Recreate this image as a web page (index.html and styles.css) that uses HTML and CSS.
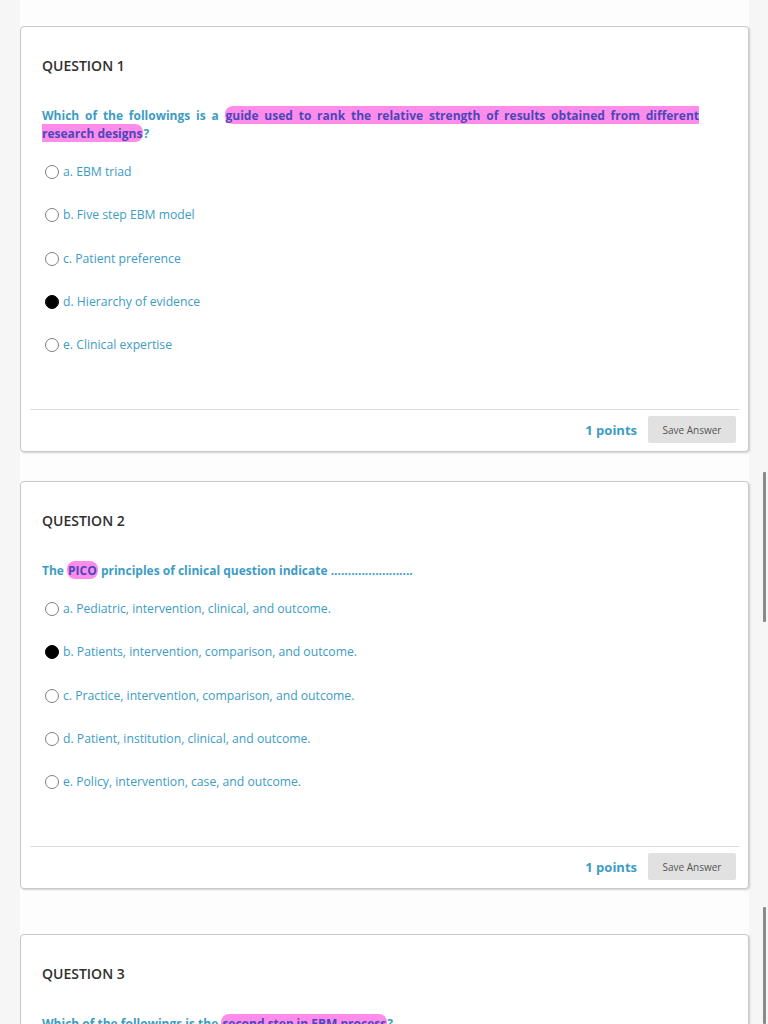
FILE: index.html
```html
<!DOCTYPE html>
<html>
<head>
<meta charset="utf-8">
<link rel="stylesheet" href="styles.css">
</head>
<body>
<div class="page">
  <section class="card card-first">
    <div class="card-body">
      <h2 class="q-title">QUESTION 1</h2>
      <p class="q-text">Which of the followings is a <span class="hl">guide used to rank the relative strength of results obtained from different research designs</span>?</p>
      <ul class="options">
        <li class="option"><span class="radio"></span><span class="opt-label">a. EBM triad</span></li>
        <li class="option"><span class="radio"></span><span class="opt-label">b. Five step EBM model</span></li>
        <li class="option"><span class="radio"></span><span class="opt-label">c. Patient preference</span></li>
        <li class="option"><span class="radio checked"></span><span class="opt-label">d. Hierarchy of evidence</span></li>
        <li class="option"><span class="radio"></span><span class="opt-label">e. Clinical expertise</span></li>
      </ul>
    </div>
    <div class="card-foot">
      <span class="points">1 points</span>
      <button class="save">Save Answer</button>
    </div>
  </section>

  <section class="card card-second">
    <div class="card-body">
      <h2 class="q-title">QUESTION 2</h2>
      <p class="q-text">The <span class="hl">PICO</span> principles of clinical question indicate ........................</p>
      <ul class="options options-2">
        <li class="option"><span class="radio"></span><span class="opt-label">a. Pediatric, intervention, clinical, and outcome.</span></li>
        <li class="option"><span class="radio checked"></span><span class="opt-label">b. Patients, intervention, comparison, and outcome.</span></li>
        <li class="option"><span class="radio"></span><span class="opt-label">c. Practice, intervention, comparison, and outcome.</span></li>
        <li class="option"><span class="radio"></span><span class="opt-label">d. Patient, institution, clinical, and outcome.</span></li>
        <li class="option"><span class="radio"></span><span class="opt-label">e. Policy, intervention, case, and outcome.</span></li>
      </ul>
    </div>
    <div class="card-foot">
      <span class="points">1 points</span>
      <button class="save">Save Answer</button>
    </div>
  </section>

  <section class="card card-third">
    <div class="card-body">
      <h2 class="q-title">QUESTION 3</h2>
      <p class="q-text">Which of the followings is the <span class="hl">second step in EBM process</span>?</p>
    </div>
  </section>
</div>
<div class="scroll scroll-a"></div>
<div class="scroll scroll-b"></div>
</body>
</html>
```

FILE: styles.css
```css
html, body {
  margin: 0;
  padding: 0;
}
body {
  background: #f6f6f6;
  font-family: "Open Sans", "Noto Sans", "Liberation Sans", sans-serif;
  height: 1024px;
  overflow: hidden;
}
.page {
  width: 729px;
  margin-left: 20px;
  background: #fdfdfd;
  padding-top: 26px;
  min-height: 1100px;
}
.card {
  background: #fff;
  border: 1px solid #c9c9c9;
  border-radius: 4px;
  box-shadow: 1px 1px 2px rgba(0,0,0,0.18);
  box-sizing: border-box;
}
.card-second { margin-top: 29px; }
.card-third { margin-top: 45px; }
.card-body {
  padding: 29px 21px 0 21px;
}
.q-title {
  margin: 0;
  font-size: 14px;
  line-height: 20px;
  font-weight: 600;
  color: #2f2f2f;
}
.q-text {
  margin: 31px 0 0 0;
  font-size: 12px;
  line-height: 18px;
  font-weight: 700;
  color: #3d9cc4;
  text-align: justify;
  padding-right: 28px;
}
.hl {
  background: #ff8ceb;
  color: #4a47b8;
  border-radius: 8px;
  padding: 1px 1px 0 1px;
}
.options {
  list-style: none;
  margin: 20px 0 0 0;
  padding: 0;
  display: flex;
  flex-direction: column;
  gap: 25.3px;
}
.options-2 { margin-top: 20px; }
.option {
  display: flex;
  align-items: center;
  gap: 4px;
  height: 18px;
}
.radio {
  width: 14px;
  height: 14px;
  box-sizing: border-box;
  border: 1.5px solid #808080;
  border-radius: 50%;
  background: #fff;
  margin-left: 3px;
  flex: none;
}
.radio.checked {
  background: #000;
  border-color: #000;
}
.opt-label {
  font-size: 12.2px;
  line-height: 18px;
  color: #3d9cc4;
}
.card-foot {
  margin: 55px 9px 0 9px;
  border-top: 1px solid #dcdcdc;
  padding: 6px 3px 8px 0;
  display: flex;
  justify-content: flex-end;
  align-items: center;
  gap: 11px;
}
.points {
  font-size: 13px;
  font-weight: 700;
  color: #3d9cc4;
}
.save {
  height: 27px;
  width: 88px;
  border: none;
  border-radius: 2px;
  background: #e1e1e1;
  color: #555;
  font-family: "Open Sans", "Noto Sans", "Liberation Sans", sans-serif;
  font-size: 10px;
  padding: 0;
}
.scroll {
  position: fixed;
  left: 763px;
  width: 3px;
  background: #8a8a8a;
  border-radius: 1px;
}
.scroll-a { top: 472px; height: 150px; }
.scroll-b { top: 907px; height: 117px; }
```
